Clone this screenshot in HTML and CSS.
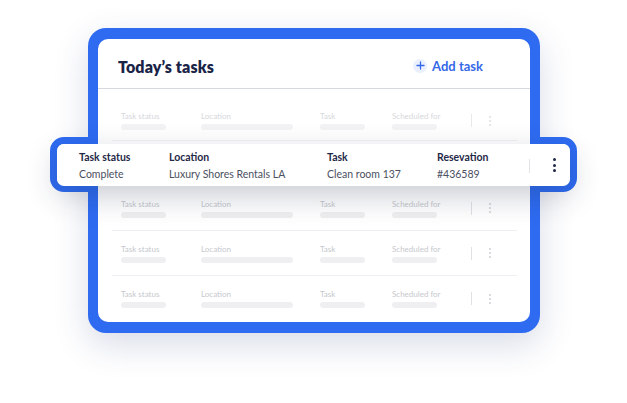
FILE: index.html
```html
<!DOCTYPE html>
<html lang="en">
<head>
    <meta charset="UTF-8">
    <meta name="viewport" content="width=device-width, initial-scale=1.0">
    <title>Today's tasks</title>
    <link rel="stylesheet" href="styles.css">
</head>
<body>
    <div class="stage">
        <div class="board">
            <div class="panel">
                <div class="panel-header">
                    <h1>Today’s tasks</h1>
                    <a class="add-task" href="#">
                        <span class="plus">
                            <svg width="9" height="9" viewBox="0 0 9 9"><path d="M4.5 1v7M1 4.5h7" stroke="#3568e8" stroke-width="1.3" stroke-linecap="round"/></svg>
                        </span>
                        Add task
                    </a>
                </div>

                <!-- placeholder rows behind the highlighted one -->
                <div class="rows">
                    <div class="row first">
                        <div class="cell"><span>Task status</span><i class="bar"></i></div>
                        <div class="cell"><span>Location</span><i class="bar wide"></i></div>
                        <div class="cell"><span>Task</span><i class="bar"></i></div>
                        <div class="cell"><span>Scheduled for</span><i class="bar"></i></div>
                        <div class="sep"></div>
                        <div class="dots"><b></b><b></b><b></b></div>
                    </div>
                    <!-- covered by the highlighted card -->
                    <div class="row covered"></div>
                    <div class="row">
                        <div class="cell"><span>Task status</span><i class="bar"></i></div>
                        <div class="cell"><span>Location</span><i class="bar wide"></i></div>
                        <div class="cell"><span>Task</span><i class="bar"></i></div>
                        <div class="cell"><span>Scheduled for</span><i class="bar"></i></div>
                        <div class="sep"></div>
                        <div class="dots"><b></b><b></b><b></b></div>
                    </div>
                    <div class="row">
                        <div class="cell"><span>Task status</span><i class="bar"></i></div>
                        <div class="cell"><span>Location</span><i class="bar wide"></i></div>
                        <div class="cell"><span>Task</span><i class="bar"></i></div>
                        <div class="cell"><span>Scheduled for</span><i class="bar"></i></div>
                        <div class="sep"></div>
                        <div class="dots"><b></b><b></b><b></b></div>
                    </div>
                    <div class="row last">
                        <div class="cell"><span>Task status</span><i class="bar"></i></div>
                        <div class="cell"><span>Location</span><i class="bar wide"></i></div>
                        <div class="cell"><span>Task</span><i class="bar"></i></div>
                        <div class="cell"><span>Scheduled for</span><i class="bar"></i></div>
                        <div class="sep"></div>
                        <div class="dots"><b></b><b></b><b></b></div>
                    </div>
                </div>
            </div>

            <!-- highlighted task popping out of the list -->
            <div class="highlight">
                <div class="highlight-frame"></div>
                <div class="highlight-card">
                    <div class="hcell status"><strong>Task status</strong><span>Complete</span></div>
                    <div class="hcell location"><strong>Location</strong><span>Luxury Shores Rentals LA</span></div>
                    <div class="hcell task"><strong>Task</strong><span>Clean room 137</span></div>
                    <div class="hcell booking"><strong>Resevation</strong><span>#436589</span></div>
                    <div class="hsep"></div>
                    <div class="hdots"><b></b><b></b><b></b></div>
                </div>
            </div>
        </div>
    </div>
</body>
</html>
```

FILE: styles.css
```css
body {
    margin: 0;
    padding: 0;
    background-color: #ffffff;
    font-family: Lato, "Open Sans", Arial, sans-serif;
}

.stage {
    width: 627px;
    height: 403px;
    padding: 28px 0 0 88px;
    box-sizing: border-box;
    overflow: hidden;
}

.board {
    position: relative;
    width: 452px;
    height: 305px;
    padding: 11px 10px;
    box-sizing: border-box;
    background-color: #2e6bf1;
    border-radius: 18px;
    box-shadow: 0 12px 34px rgba(40, 60, 120, 0.18);
}

.panel {
    position: relative;
    z-index: 2;
    height: 100%;
    background-color: #ffffff;
    border-radius: 10px;
    overflow: hidden;
}

.panel-header {
    display: flex;
    align-items: center;
    justify-content: space-between;
    height: 50px;
    padding: 5px 47px 0 20px;
    box-sizing: border-box;
    border-bottom: 1px solid #d6d9df;
}

.panel-header h1 {
    margin: 0;
    font-size: 16px;
    font-weight: 800;
    color: #1a2447;
    letter-spacing: 0.1px;
}

.add-task {
    display: flex;
    align-items: center;
    gap: 5px;
    margin-top: -1px;
    font-size: 13px;
    font-weight: 700;
    color: #3568e8;
    text-decoration: none;
}

.plus {
    display: flex;
    align-items: center;
    justify-content: center;
    width: 14px;
    height: 14px;
    border-radius: 50%;
    background-color: #eaf0fd;
}

.rows {
    padding: 0 13px 0 14px;
}

.row {
    display: flex;
    align-items: center;
    height: 45px;
    padding-left: 9px;
    border-bottom: 1px solid #eceef1;
    box-sizing: border-box;
}

.row.first {
    height: 52px;
    padding-top: 12px;
    opacity: 0.7;
}

.row.last {
    border-bottom: none;
}

.cell {
    display: flex;
    flex-direction: column;
    gap: 3px;
}

.cell:nth-child(1) { width: 80px; }
.cell:nth-child(2) { width: 119px; }
.cell:nth-child(3) { width: 72px; }
.cell:nth-child(4) { width: 79px; }

.cell span {
    font-size: 8px;
    line-height: 10px;
    color: #c6c8cd;
}

.bar {
    display: block;
    width: 45px;
    height: 6px;
    border-radius: 3px;
    background-color: #efeff1;
}

.bar.wide {
    width: 92px;
}

.sep {
    width: 1px;
    height: 13px;
    background-color: #dfe1e5;
}

.dots {
    display: flex;
    flex-direction: column;
    gap: 2px;
    margin-left: 17px;
}

.dots b {
    width: 2px;
    height: 2px;
    border-radius: 50%;
    background-color: #cdd0d5;
}

/* highlighted row */
.highlight {
    position: absolute;
    left: -38px;
    top: 109px;
    width: 527px;
    height: 55px;
}

.highlight-frame {
    position: absolute;
    top: 0;
    left: 0;
    right: 0;
    bottom: 0;
    z-index: 1;
    border: 7px solid #2e6bf1;
    border-radius: 14px;
}

.highlight-card {
    position: absolute;
    top: 7px;
    left: 7px;
    right: 7px;
    bottom: 6px;
    z-index: 3;
    display: flex;
    align-items: center;
    padding-left: 22px;
    background-color: #ffffff;
    border-radius: 7px;
    box-shadow: 0 10px 30px rgba(30, 40, 70, 0.24);
}

.hcell {
    display: flex;
    flex-direction: column;
    gap: 3px;
    font-size: 10.5px;
    line-height: 14px;
}

.hcell strong {
    font-weight: 700;
    color: #1f2947;
}

.hcell span {
    color: #4b5061;
}

.hcell.status { width: 90px; }
.hcell.location { width: 158px; }
.hcell.task { width: 110px; }
.hcell.booking { width: 92px; }

.hsep {
    width: 1px;
    height: 14px;
    margin-top: 2px;
    background-color: #e2e4e8;
}

.hdots {
    display: flex;
    flex-direction: column;
    gap: 2.5px;
    margin-left: 23px;
}

.hdots b {
    width: 3px;
    height: 3px;
    border-radius: 50%;
    background-color: #1f2947;
}
```
